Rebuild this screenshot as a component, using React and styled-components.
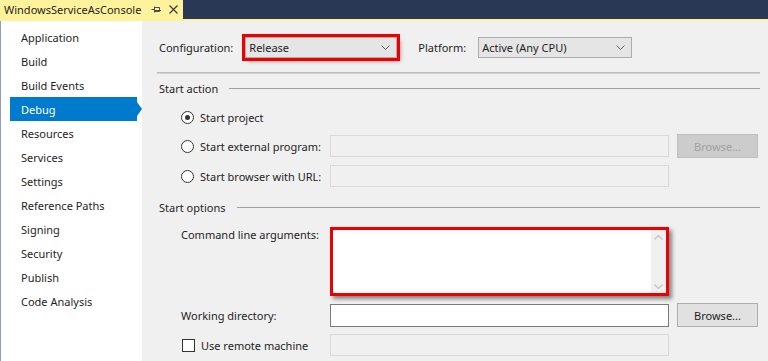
import React from "react";
import styled, { createGlobalStyle } from "styled-components";

const GlobalStyle = createGlobalStyle`
  html, body {
    margin: 0;
    padding: 0;
    background: #f0f0f0;
  }
  body {
    font-family: "Noto Sans", "Open Sans", sans-serif;
    font-size: 11px;
    color: #1e1e1e;
  }
  * {
    box-sizing: border-box;
  }
`;

const pages = [
  "Application",
  "Build",
  "Build Events",
  "Debug",
  "Resources",
  "Services",
  "Settings",
  "Reference Paths",
  "Signing",
  "Security",
  "Publish",
  "Code Analysis",
];

const Chevron = () => (
  <svg width="9" height="5" viewBox="0 0 9 5">
    <path d="M0.5 0.5 L4.5 4.5 L8.5 0.5" fill="none" stroke="#606060" strokeWidth="1" />
  </svg>
);

const PinIcon = () => (
  <svg width="11" height="11" viewBox="0 0 11 11">
    <path d="M0.5 5.5 H3.5 M3.5 2.5 V8.5 M3.5 3.5 H8.5 V7.5 H3.5 M3.5 6.5 H10" fill="none" stroke="#4b4b4b" strokeWidth="1" />
  </svg>
);

const CloseIcon = () => (
  <svg width="9" height="9" viewBox="0 0 9 9">
    <path d="M0.5 0.5 L8.5 8.5 M8.5 0.5 L0.5 8.5" fill="none" stroke="#3c3c3c" strokeWidth="1.2" />
  </svg>
);

const ScrollArrow = ({ up }) => (
  <svg width="9" height="5" viewBox="0 0 9 5">
    <path
      d={up ? "M0.5 4.5 L4.5 0.5 L8.5 4.5" : "M0.5 0.5 L4.5 4.5 L8.5 0.5"}
      fill="none"
      stroke="#c2c2c2"
      strokeWidth="1.2"
    />
  </svg>
);

const App = () => {
  return (
    <>
      <GlobalStyle />
      <Window>
        <TabBar>
          <Tab>
            <TabTitle>WindowsServiceAsConsole</TabTitle>
            <TabButton>
              <PinIcon />
            </TabButton>
            <TabButton>
              <CloseIcon />
            </TabButton>
          </Tab>
        </TabBar>
        <Main>
          <Sidebar>
            {pages.map((p) => (
              <NavItem key={p} $active={p === "Debug"}>
                {p}
              </NavItem>
            ))}
          </Sidebar>
          <Content>
            <ConfigRow>
              <span>Configuration:</span>
              <Select $width={152} $highlight>
                <span>Release</span>
                <Chevron />
              </Select>
              <PlatformLabel>Platform:</PlatformLabel>
              <Select $width={154}>
                <span>Active (Any CPU)</span>
                <Chevron />
              </Select>
            </ConfigRow>
            <Divider />

            <SectionHeader>Start action</SectionHeader>
            <FormGrid $top={10} $gap={7}>
              <OptionLabel>
                <Radio $checked />
                Start project
              </OptionLabel>
              <span />
              <span />

              <OptionLabel>
                <Radio />
                Start external program:
              </OptionLabel>
              <TextBox $disabled />
              <Button disabled>Browse...</Button>

              <OptionLabel>
                <Radio />
                Start browser with URL:
              </OptionLabel>
              <TextBox $disabled />
              <span />
            </FormGrid>

            <SectionHeader $top={12}>Start options</SectionHeader>
            <FormGrid $top={12} $gap={8}>
              <TopLabel>Command line arguments:</TopLabel>
              <ArgsBox>
                <ArgsInput />
                <Scrollbar>
                  <ScrollArrow up />
                  <ScrollArrow />
                </Scrollbar>
              </ArgsBox>
              <span />

              <OptionLabel>Working directory:</OptionLabel>
              <TextBox />
              <Button>Browse...</Button>
            </FormGrid>
            <FormGrid $top={7} $gap={0}>
              <OptionLabel>
                <Checkbox />
                Use remote machine
              </OptionLabel>
              <TextBox $disabled />
              <span />
            </FormGrid>
          </Content>
        </Main>
      </Window>
    </>
  );
};

const Window = styled.div`
  width: 768px;
  height: 361px;
  display: flex;
  flex-direction: column;
  overflow: hidden;
`;

const TabBar = styled.div`
  height: 21px;
  flex: none;
  display: flex;
  background: #293955;
  border-bottom: 2px solid #fff29d;
`;

const Tab = styled.div`
  width: 183px;
  height: 19px;
  display: flex;
  align-items: center;
  padding-left: 4px;
  background: #fff29d;
  color: #1e1e1e;
  font-size: 11px;
`;

const TabTitle = styled.span`
  margin-right: 8px;
`;

const TabButton = styled.span`
  width: 14px;
  display: flex;
  align-items: center;
  justify-content: center;
  margin-right: 3px;
`;

const Main = styled.div`
  flex: 1;
  display: flex;
  border-left: 1px solid #8f9ec0;
`;

const Sidebar = styled.nav`
  width: 141px;
  flex: none;
  background: #ffffff;
  padding-top: 4px;
  display: flex;
  flex-direction: column;
`;

const NavItem = styled.div`
  position: relative;
  height: 24px;
  width: 127px;
  margin-left: 9px;
  padding-left: 11px;
  display: flex;
  align-items: center;
  background: ${(p) => (p.$active ? "#007acc" : "transparent")};
  color: ${(p) => (p.$active ? "#ffffff" : "#1e1e1e")};

  &::after {
    content: "";
    display: ${(p) => (p.$active ? "block" : "none")};
    position: absolute;
    right: -5px;
    top: 5px;
    border-top: 7px solid transparent;
    border-bottom: 7px solid transparent;
    border-left: 5px solid #007acc;
  }
`;

const Content = styled.div`
  flex: 1;
  padding: 16px 8px 0 17px;
  display: flex;
  flex-direction: column;
`;

const ConfigRow = styled.div`
  display: flex;
  align-items: center;
  height: 21px;
  gap: 12px;
`;

const PlatformLabel = styled.span`
  margin-left: 9px;
`;

const Select = styled.div`
  width: ${(p) => p.$width}px;
  height: 21px;
  display: flex;
  align-items: center;
  justify-content: space-between;
  padding: 0 6px 0 3px;
  background: #e5e5e5;
  border: 1px solid #acacac;
  color: #1e1e1e;
  ${(p) =>
    p.$highlight &&
    `
    outline: 3px solid #ee0000;
    box-shadow: 3px 3px 4px rgba(0, 0, 0, 0.45);
  `}
`;

const Divider = styled.div`
  height: 2px;
  margin-top: 14px;
  margin-left: -2px;
  background: #d2d2d2;
  border-top: 1px solid #bdbdbd;
`;

const SectionHeader = styled.div`
  display: flex;
  align-items: center;
  height: 16px;
  margin-top: ${(p) => p.$top || 6}px;
  gap: 11px;

  &::after {
    content: "";
    flex: 1;
    height: 1px;
    background: #a0a0a0;
  }
`;

const FormGrid = styled.div`
  display: grid;
  grid-template-columns: 141px 339px 81px;
  grid-auto-rows: minmax(22px, auto);
  column-gap: 8px;
  row-gap: ${(p) => p.$gap}px;
  margin-top: ${(p) => p.$top}px;
  margin-left: 22px;
`;

const OptionLabel = styled.label`
  display: flex;
  align-items: center;
  gap: 6px;
  white-space: nowrap;
`;

const TopLabel = styled.label`
  line-height: 16px;
`;

const Radio = styled.span`
  width: 13px;
  height: 13px;
  border-radius: 50%;
  border: 1px solid #333333;
  background: #ffffff;
  display: flex;
  align-items: center;
  justify-content: center;

  &::after {
    content: "";
    display: ${(p) => (p.$checked ? "block" : "none")};
    width: 5px;
    height: 5px;
    border-radius: 50%;
    background: #333333;
  }
`;

const Checkbox = styled.span`
  width: 13px;
  height: 13px;
  margin-left: 1px;
  border: 1px solid #333333;
  background: #ffffff;
`;

const TextBox = styled.div`
  height: ${(p) => (p.$disabled ? 22 : 23)}px;
  background: ${(p) => (p.$disabled ? "#f0f0f0" : "#ffffff")};
  border: 1px solid ${(p) => (p.$disabled ? "#d9d9d9" : "#7a7a7a")};
`;

const Button = styled.button`
  height: 24px;
  margin-top: -1px;
  font-family: inherit;
  font-size: 11px;
  background: ${(p) => (p.disabled ? "#cccccc" : "#e1e1e1")};
  color: ${(p) => (p.disabled ? "#a0a0a0" : "#1e1e1e")};
  border: 1px solid ${(p) => (p.disabled ? "#bfbfbf" : "#adadad")};
  padding: 0;
`;

const ArgsBox = styled.div`
  height: 69px;
  display: flex;
  background: #ffffff;
  border: 3px solid #ee0000;
  box-shadow: 3px 3px 4px rgba(0, 0, 0, 0.45);
`;

const ArgsInput = styled.div`
  flex: 1;
`;

const Scrollbar = styled.div`
  width: 15px;
  background: #f0f0f0;
  display: flex;
  flex-direction: column;
  align-items: center;
  justify-content: space-between;
  padding: 5px 0 4px;
`;

export default App;
